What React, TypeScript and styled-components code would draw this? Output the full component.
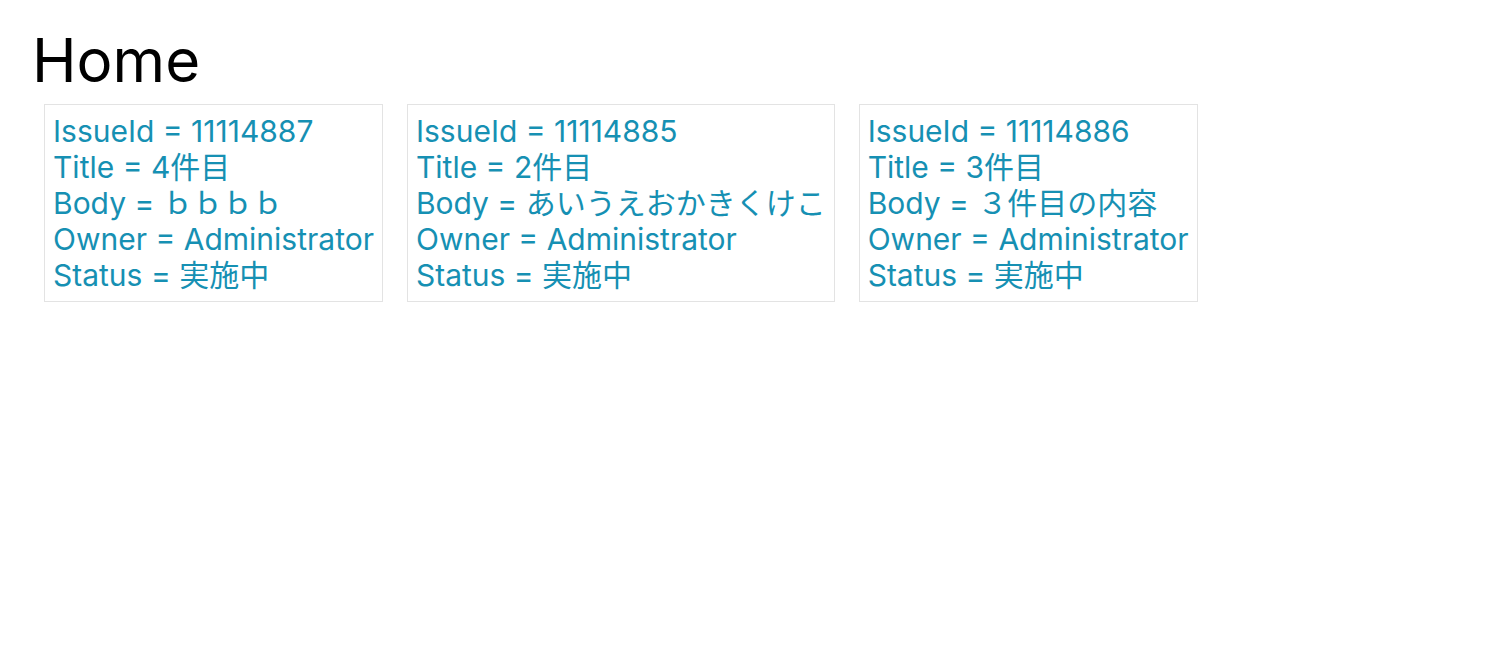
import React from "react";
import styled, { createGlobalStyle } from "styled-components";

const GlobalStyle = createGlobalStyle`
  html, body {
    margin: 0;
    padding: 0;
    background: #ffffff;
    font-family: Inter, "Noto Sans CJK JP", sans-serif;
  }
`;

const Page = styled.main`
  padding: 24px 32px;
`;

const Heading = styled.h1`
  margin: 0 0 8px 0;
  font-size: 60px;
  font-weight: 400;
  line-height: 72px;
  color: #000000;
`;

const CardList = styled.div`
  display: flex;
  align-items: flex-start;
  gap: 24px;
  margin-left: 12px;
`;

const Card = styled.div`
  border: 1px solid #e3e3e3;
  padding: 8px;
`;

const Line = styled.div`
  font-size: 30px;
  line-height: 36px;
  color: #1690b3;
  white-space: nowrap;
`;

type Issue = {
  id: number;
  title: string;
  body: string;
  owner: string;
  status: string;
};

const issues: Issue[] = [
  { id: 11114887, title: "4件目", body: "ｂｂｂｂ", owner: "Administrator", status: "実施中" },
  { id: 11114885, title: "2件目", body: "あいうえおかきくけこ", owner: "Administrator", status: "実施中" },
  { id: 11114886, title: "3件目", body: "３件目の内容", owner: "Administrator", status: "実施中" },
];

const App: React.FC = () => (
  <>
    <GlobalStyle />
    <Page>
      <Heading>Home</Heading>
      <CardList>
        {issues.map((issue) => (
          <Card key={issue.id}>
            <Line>IssueId = {issue.id}</Line>
            <Line>Title = {issue.title}</Line>
            <Line>Body = {issue.body}</Line>
            <Line>Owner = {issue.owner}</Line>
            <Line>Status = {issue.status}</Line>
          </Card>
        ))}
      </CardList>
    </Page>
  </>
);

export default App;
